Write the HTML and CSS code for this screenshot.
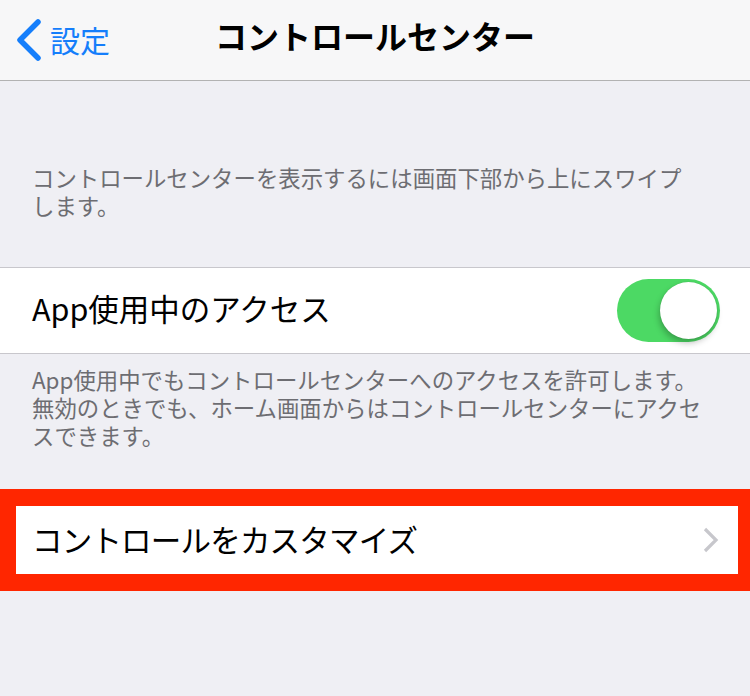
FILE: index.html
```html
<!DOCTYPE html>
<html lang="ja">
<head>
  <meta charset="UTF-8" />
  <title>コントロールセンター</title>
  <link rel="stylesheet" href="styles.css">
</head>
<body>
  <header class="nav-bar">
    <a class="back-link" href="#">
      <svg class="back-chevron" width="28" height="44" viewBox="0 0 28 44">
        <path d="M23 3 L5 21 L23 39" fill="none" stroke="#157efb" stroke-width="5.5" stroke-linecap="round" stroke-linejoin="round"/>
      </svg>
      <span>設定</span>
    </a>
    <h1 class="nav-title">コントロールセンター</h1>
    <div></div>
  </header>

  <main>
    <p class="note intro">コントロールセンターを表示するには画面下部から上にスワイプ<br>します。</p>

    <div class="cell">
      <span class="cell-label">App使用中のアクセス</span>
      <div class="switch on"><span class="knob"></span></div>
    </div>

    <p class="note footer">App使用中でもコントロールセンターへのアクセスを許可します。<br>無効のときでも、ホーム画面からはコントロールセンターにアクセ<br>スできます。</p>

    <!-- highlighted row -->
    <div class="highlight">
      <a class="cell cell-link" href="#">
        <span class="cell-label">コントロールをカスタマイズ</span>
        <svg class="chevron" width="18" height="28" viewBox="0 0 18 28">
          <path d="M3 3 L14 14 L3 25" fill="none" stroke="#c7c7cc" stroke-width="3.2"/>
        </svg>
      </a>
    </div>
  </main>
</body>
</html>
```

FILE: styles.css
```css
:root {
  --blue: #157efb;
  --bg: #efeff4;
  --bar: #f7f7f8;
  --separator: #c8c7cc;
  --note: #6d6d72;
  --green: #4cd964;
  --mark: #ff2600;
}

* {
  box-sizing: border-box;
}

body {
  margin: 0;
  background: var(--bg);
  font-family: "Noto Sans CJK JP", sans-serif;
  color: #000;
  height: 696px;
  overflow: hidden;
}

.nav-bar {
  height: 81px;
  background: var(--bar);
  border-bottom: 1px solid #b2b2b2;
  display: grid;
  grid-template-columns: 1fr auto 1fr;
  align-items: start;
}

.back-link {
  display: flex;
  align-items: center;
  gap: 7px;
  padding: 14px 0 0 15px;
  color: var(--blue);
  text-decoration: none;
  font-size: 30px;
  line-height: 40px;
}

.back-chevron {
  margin-top: 5px;
}

.nav-title {
  margin: 0;
  padding-top: 15px;
  font-size: 32px;
  font-weight: bold;
  line-height: 40px;
}

.note {
  margin: 0;
  padding: 0 32px;
  font-size: 22.4px;
  line-height: 28px;
  color: var(--note);
}

.intro {
  margin-top: 82px;
}

.cell {
  margin-top: 48px;
  height: 87px;
  background: #fff;
  border-top: 1px solid var(--separator);
  border-bottom: 1px solid var(--separator);
  display: flex;
  align-items: center;
  justify-content: space-between;
  padding: 0 30px 0 32px;
}

.cell-label {
  font-size: 30.5px;
  line-height: 40px;
  margin-top: -6px;
}

.switch {
  width: 103px;
  height: 63px;
  border-radius: 32px;
  background: var(--green);
  display: flex;
  align-items: center;
  justify-content: flex-end;
  padding: 0 3px;
}

.knob {
  width: 57px;
  height: 57px;
  border-radius: 50%;
  background: #fff;
  box-shadow: -1px 4px 6px rgba(0, 0, 0, 0.25), 0 0 1px rgba(0, 0, 0, 0.2);
}

.footer {
  margin-top: 11px;
}

.highlight {
  margin-top: 40px;
  border-style: solid;
  border-color: var(--mark);
  border-width: 17px 12px 17px 16px;
}

.cell-link {
  margin-top: 0;
  height: 68px;
  border: none;
  color: #000;
  text-decoration: none;
  padding: 0 18px 0 16px;
}

.cell-link .cell-label {
  margin-top: -2px;
  letter-spacing: -0.8px;
}

.chevron {
  display: block;
}
```
